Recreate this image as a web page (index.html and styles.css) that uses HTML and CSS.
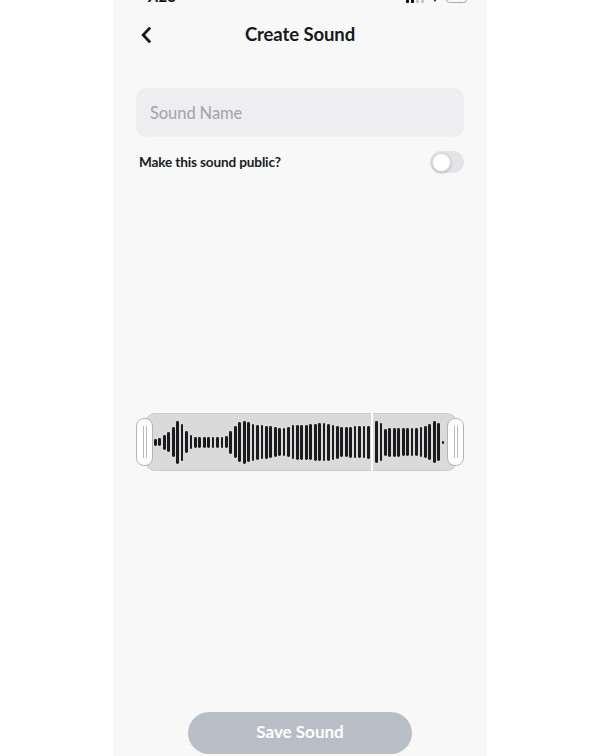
FILE: index.html
```html
<!DOCTYPE html>
<html lang="en">
<head>
<meta charset="utf-8">
<title>Create Sound</title>
<link rel="stylesheet" href="styles.css">
</head>
<body>
<div class="phone">
  <div class="status">
    <span class="time">9:23</span>
    <svg class="status-icons" width="62" height="12" viewBox="0 0 62 12">
      <rect x="0" y="8" width="3" height="4" rx="0.8" fill="#111"/>
      <rect x="5" y="6" width="3" height="6" rx="0.8" fill="#111"/>
      <rect x="10" y="3" width="3" height="9" rx="0.8" fill="#c8c8c8"/>
      <rect x="15" y="0" width="3" height="12" rx="0.8" fill="#c8c8c8"/>
      <path d="M25.5 5 Q29 1.5 32.5 5 L29 11 Z" fill="#111"/>
      <rect x="40.5" y="0.5" width="20" height="11" rx="3" fill="none" stroke="#aaa" stroke-width="1"/>
    </svg>
  </div>
  <header class="header">
    <div class="header-left">
      <svg class="back" width="10" height="16" viewBox="0 0 10 16">
        <path d="M8.2 1.6 L2.2 8 L8.2 14.4" fill="none" stroke="#16191c" stroke-width="2.8" stroke-linecap="square" stroke-linejoin="miter"/>
      </svg>
    </div>
    <h1 class="title">Create Sound</h1>
    <div class="header-right"></div>
  </header>

  <div class="name-field">Sound Name</div>

  <div class="public-row">
    <span class="public-label">Make this sound public?</span>
    <span class="toggle"><span class="knob"></span></span>
  </div>

  <main class="middle">
    <div class="wave">
      <div class="track">
        <span class="bar" style="height:7px"></span>
        <span class="bar" style="height:8px"></span>
        <span class="bar" style="height:15px"></span>
        <span class="bar" style="height:20px"></span>
        <span class="bar" style="height:30px"></span>
        <span class="bar" style="height:43px"></span>
        <span class="bar" style="height:37px"></span>
        <span class="bar" style="height:22px"></span>
        <span class="bar" style="height:14px"></span>
        <span class="bar" style="height:11px"></span>
        <span class="bar" style="height:11px"></span>
        <span class="bar" style="height:11px"></span>
        <span class="bar" style="height:11px"></span>
        <span class="bar" style="height:11px"></span>
        <span class="bar" style="height:11px"></span>
        <span class="bar" style="height:11px"></span>
        <span class="bar" style="height:12px"></span>
        <span class="bar" style="height:23px"></span>
        <span class="bar" style="height:32px"></span>
        <span class="bar" style="height:40px"></span>
        <span class="bar" style="height:43px"></span>
        <span class="bar" style="height:40px"></span>
        <span class="bar" style="height:37px"></span>
        <span class="bar" style="height:35px"></span>
        <span class="bar" style="height:34px"></span>
        <span class="bar" style="height:33px"></span>
        <span class="bar" style="height:32px"></span>
        <span class="bar" style="height:30px"></span>
        <span class="bar" style="height:28px"></span>
        <span class="bar" style="height:28px"></span>
        <span class="bar" style="height:30px"></span>
        <span class="bar" style="height:34px"></span>
        <span class="bar" style="height:35px"></span>
        <span class="bar" style="height:35px"></span>
        <span class="bar" style="height:35px"></span>
        <span class="bar" style="height:36px"></span>
        <span class="bar" style="height:37px"></span>
        <span class="bar" style="height:38px"></span>
        <span class="bar" style="height:38px"></span>
        <span class="bar" style="height:37px"></span>
        <span class="bar" style="height:35px"></span>
        <span class="bar" style="height:33px"></span>
        <span class="bar" style="height:30px"></span>
        <span class="bar" style="height:30px"></span>
        <span class="bar" style="height:31px"></span>
        <span class="bar" style="height:32px"></span>
        <span class="bar" style="height:32px"></span>
        <span class="bar" style="height:32px"></span>
        <span class="bar" style="height:33px"></span>
        <span class="divider"></span>
        <span class="bar" style="height:42px"></span>
        <span class="bar" style="height:38px"></span>
        <span class="bar" style="height:27px"></span>
        <span class="bar" style="height:29px"></span>
        <span class="bar" style="height:29px"></span>
        <span class="bar" style="height:29px"></span>
        <span class="bar" style="height:28px"></span>
        <span class="bar" style="height:28px"></span>
        <span class="bar" style="height:28px"></span>
        <span class="bar" style="height:28px"></span>
        <span class="bar" style="height:30px"></span>
        <span class="bar" style="height:32px"></span>
        <span class="bar" style="height:36px"></span>
        <span class="bar" style="height:42px"></span>
        <span class="bar" style="height:38px"></span>
        <span class="bar" style="height:3px"></span>
      </div>
      <span class="handle handle-left"><i></i><i></i></span>
      <span class="handle handle-right"><i></i><i></i></span>
    </div>
  </main>

  <div class="footer">
    <button class="save" type="button">Save Sound</button>
  </div>
</div>
</body>
</html>
```

FILE: styles.css
```css
* {
  box-sizing: border-box;
}

html, body {
  margin: 0;
  padding: 0;
  background: #ffffff;
}

body {
  font-family: Lato, "Open Sans", "Noto Sans", sans-serif;
  color: #16191c;
}

.phone {
  width: 374px;
  height: 756px;
  margin: 0 auto;
  background: #f8f8f8;
  display: flex;
  flex-direction: column;
  overflow: hidden;
}

.status {
  height: 4px;
  overflow: hidden;
  display: flex;
  align-items: flex-end;
  justify-content: space-between;
  padding: 0 19px 0 33px;
  flex: none;
}

.time {
  font-size: 15px;
  line-height: 15px;
  font-weight: 700;
  color: #111;
}

.status-icons {
  display: block;
  margin-bottom: 1px;
}

.header {
  height: 62px;
  flex: none;
  display: grid;
  grid-template-columns: 1fr auto 1fr;
  align-items: center;
  padding-bottom: 2px;
}

.header-left {
  padding-left: 28px;
  padding-top: 2px;
  display: flex;
  align-items: center;
}

.back {
  display: block;
}

.title {
  margin: 0;
  font-size: 18.5px;
  font-weight: 700;
  line-height: 22px;
  color: #16191c;
  letter-spacing: -0.1px;
}

.name-field {
  margin: 22px 23px 0;
  height: 49px;
  flex: none;
  border-radius: 10px;
  background: #eeeef0;
  padding-left: 14px;
  display: flex;
  align-items: center;
  font-size: 16.5px;
  font-weight: 500;
  color: #a4a8ae;
  letter-spacing: -0.1px;
}

.public-row {
  margin: 13px 23px 0;
  height: 24px;
  flex: none;
  display: flex;
  align-items: center;
  justify-content: space-between;
}

.public-label {
  padding-left: 3px;
  font-size: 13.6px;
  font-weight: 700;
  color: #1a1c1f;
  letter-spacing: -0.15px;
}

.toggle {
  width: 34px;
  height: 22px;
  border-radius: 11px;
  background: #e4e4e8;
  display: flex;
  align-items: center;
  padding-left: 2px;
}

.knob {
  width: 19px;
  height: 19px;
  border-radius: 50%;
  background: #ffffff;
  border: 0.5px solid #dadade;
  box-shadow: 0 1px 3px rgba(0, 0, 0, 0.22);
}

.middle {
  flex: 1;
  display: flex;
  align-items: center;
  justify-content: center;
  padding-bottom: 2px;
}

.wave {
  position: relative;
  width: 328px;
  height: 58px;
}

.track {
  margin: 0 7px 0 9px;
  height: 58px;
  border-radius: 10px;
  background: #dadada;
  border: 1px solid #cacaca;
  display: flex;
  align-items: center;
  gap: 1.7px;
  padding-left: 8px;
}

.bar {
  width: 2.75px;
  flex: none;
  border-radius: 1.4px;
  background: #1b1b1d;
}

.divider {
  width: 2px;
  flex: none;
  align-self: stretch;
  margin: -1px 0;
  background: #ffffff;
}

.handle {
  position: absolute;
  top: 5px;
  width: 17px;
  height: 48px;
  border-radius: 8px;
  background: #ffffff;
  border: 1px solid #b4b4b4;
  display: flex;
  justify-content: center;
  align-items: center;
  gap: 2px;
}

.handle i {
  display: block;
  width: 1px;
  height: 32px;
  background: #b9b9b9;
}

.handle-left {
  left: 0;
}

.handle-right {
  right: 0;
}

.footer {
  flex: none;
  display: flex;
  justify-content: center;
  padding-bottom: 2px;
}

.save {
  width: 224px;
  height: 42px;
  border: none;
  border-radius: 21px;
  background: #b9bec6;
  color: #ffffff;
  font-family: Lato, "Open Sans", "Noto Sans", sans-serif;
  font-size: 17px;
  font-weight: 700;
  padding: 0 0 3px;
}
```
